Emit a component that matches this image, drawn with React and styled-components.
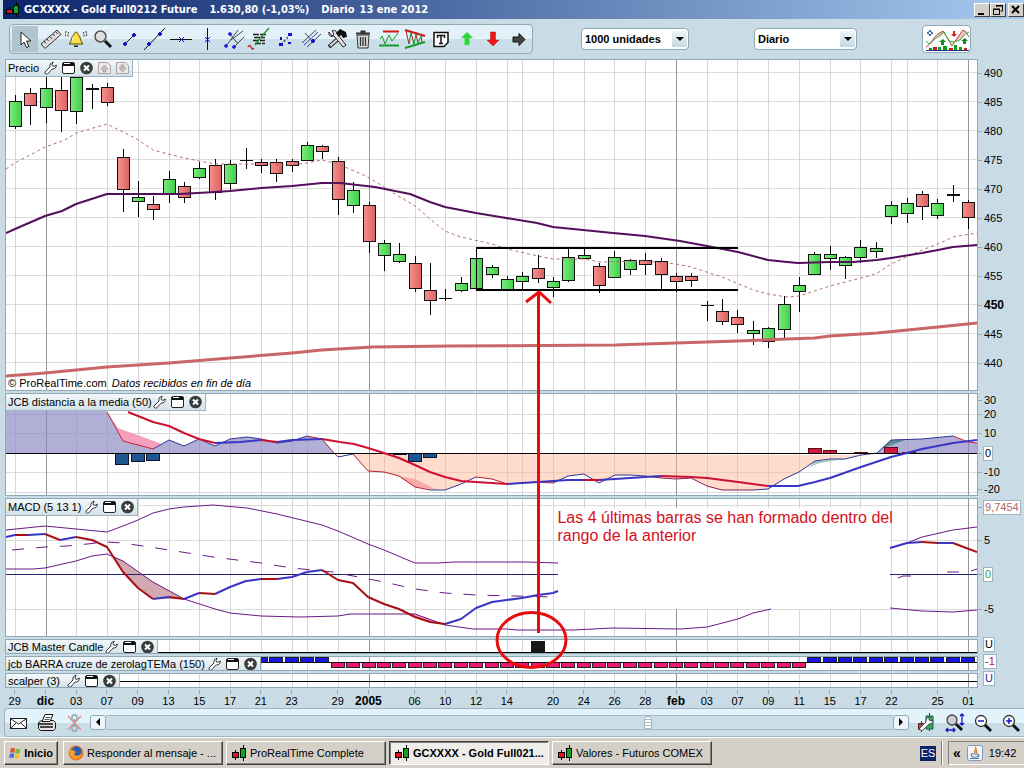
import React from "react";
import styled, { createGlobalStyle } from "styled-components";

const Global = createGlobalStyle`
  * { box-sizing: border-box; }
  body { margin: 0; background: #c9dce5; font-family: "Liberation Sans", Arial, sans-serif; font-size: 11px; color: #000; }
  button, select, input { font: inherit; color: inherit; margin: 0; padding: 0; }
`;

/* ---------- window frame ---------- */
const Window = styled.div`
  display: flex;
  flex-direction: column;
  min-height: 100vh;
`;
const TitleBar = styled.header`
  display: flex;
  align-items: center;
  gap: 4px;
  height: 19px;
  margin-left: 3px;
  padding-left: 2px;
  color: #fff;
  background: linear-gradient(90deg, #0a246a, #a6caf0);
`;
const Title = styled.h1`
  flex: 1;
  display: flex;
  gap: 12px;
  margin: 0;
  font-family: "DejaVu Sans Condensed", "Liberation Sans", sans-serif;
  font-size: 11px;
  font-weight: bold;
  white-space: nowrap;
`;
const DateGroup = styled.span`
  display: flex;
  gap: 5px;
`;
const WinButtons = styled.div`
  display: flex;
`;
const WinButton = styled.button`
  display: flex;
  width: 16px;
  height: 14px;
  margin-left: ${(p) => (p.$apart ? 2 : 0)}px;
  border: 1px solid;
  border-color: #fff #404040 #404040 #fff;
  background: #d4d0c8;
`;

/* ---------- top tools ---------- */
const TopBar = styled.div`
  display: flex;
  align-items: center;
  height: 40px;
  padding: 0 53px 0 9px;
`;
const ToolBox = styled.div`
  display: flex;
  align-items: center;
  height: 30px;
  padding: 0 0 0 2px;
  border: 1px solid #8fa9b7;
  border-radius: 4px;
  background: linear-gradient(#e4f1f8 50%, #cadfe9 50%);
`;
const ToolButton = styled.button`
  display: flex;
  align-items: center;
  justify-content: center;
  width: 26px;
  height: 26px;
  border: 0;
  background: ${(p) => (p.$on ? "#b0c4cf" : "transparent")};
`;
const TopRight = styled.div`
  flex: 1;
  display: flex;
  align-items: center;
  justify-content: space-between;
  padding-left: 48px;
`;
const Picker = styled.label`
  position: relative;
  display: flex;
  width: ${(p) => p.$w}px;
`;
const PickerSelect = styled.select`
  appearance: none;
  width: 100%;
  height: 22px;
  padding: 0 20px 0 3px;
  border: 1px solid #8fa9b7;
  border-radius: 4px;
  background: #fff;
  font-weight: bold;
`;
const PickerArrow = styled.svg`
  position: absolute;
  right: 2px;
  top: 3px;
  background: linear-gradient(#eef5f8, #c5d8e2);
  pointer-events: none;
`;
const StudyButton = styled.button`
  display: flex;
  align-items: center;
  justify-content: center;
  width: 49px;
  height: 28px;
  border: 1px solid #8fa9b7;
  border-radius: 4px;
  background: #fff;
`;

/* ---------- chart panels ---------- */
const Charts = styled.main`
  position: relative;
  display: flex;
  flex-direction: column;
  gap: 2px;
  padding-left: 5px;
`;
const PanelRow = styled.section`
  display: flex;
  height: ${(p) => p.$h}px;
`;
const Plot = styled.div`
  position: relative;
  flex: 1;
  min-width: 0;
  border: 1px solid #8fa9b7;
  background: #fff;
  overflow: hidden;
`;
const Drawing = styled.svg`
  display: block;
  width: 100%;
  height: 100%;
`;
const PanelHead = styled.div`
  position: absolute;
  left: 0;
  top: 0;
  display: flex;
  align-items: center;
  gap: 5px;
  height: ${(p) => (p.$thin ? 15 : 17)}px;
  padding: 0 3px 0 2px;
  border-right: 1px solid #9fb4c0;
  border-bottom: 1px solid #9fb4c0;
  background: linear-gradient(#f3f8fa, #d3e2e9);
`;
const PanelName = styled.h2`
  width: ${(p) => p.$w}px;
  margin: 0 -5px 0 0;
  font-size: 11px;
  font-weight: normal;
  white-space: nowrap;
`;
const HeadButton = styled.button`
  display: flex;
  width: 13px;
  height: 14px;
  border: 0;
  background: none;
`;
const Scale = styled.div`
  width: 46px;
`;
const ScaleMark = styled.div`
  display: flex;
  align-items: center;
  height: ${(p) => p.$h}px;
  font-weight: ${(p) => (p.$bold ? "bold" : "normal")};
  font-size: ${(p) => (p.$bold ? 12 : 11)}px;
  color: ${(p) => p.$color || "#000"};
  &::before {
    content: "";
    width: 4px;
    height: 1px;
    margin-right: 1px;
    background: ${(p) => (p.$noTick ? "transparent" : "#8fa9b7")};
  }
`;
const ScaleBox = styled.span`
  padding: 0 1px;
  line-height: 13px;
  border: ${(p) => (p.$boxed ? "1px solid #9fb4c0" : "0")};
  background: ${(p) => (p.$boxed ? "#fff" : "transparent")};
`;
const Credit = styled.p`
  position: absolute;
  left: 2px;
  bottom: 0;
  display: flex;
  gap: 5px;
  margin: 0;
  line-height: 13px;
`;
const Marking = styled.svg`
  position: absolute;
  left: 0;
  top: 0;
  width: 100%;
  height: 100%;
  pointer-events: none;
`;
const Note = styled.p`
  position: absolute;
  left: 57%;
  top: 10px;
  margin: 0 0 0 -2px;
  width: 340px;
  font-size: 16px;
  line-height: 18px;
  color: #d4101c;
`;
const Dates = styled.div`
  display: grid;
  grid-template-columns: repeat(63, minmax(0, 1fr));
  height: 20px;
  padding: 2px 48px 0 7px;
`;
const DateMark = styled.div`
  grid-column: ${(p) => p.$col};
  grid-row: 1;
  display: flex;
  flex-direction: column;
  align-items: center;
  font-size: ${(p) => (p.$bold ? 12 : 11)}px;
  font-weight: ${(p) => (p.$bold ? "bold" : "normal")};
  line-height: 14px;
  &::before {
    content: "";
    width: 1px;
    height: 4px;
    flex: none;
    background: #8fa9b7;
  }
`;

/* ---------- bottom bar ---------- */
const BottomBar = styled.div`
  display: flex;
  align-items: center;
  gap: 8px;
  height: 29px;
  margin-left: 4px;
  padding: 0 3px 0 4px;
  border: 1px solid #9fb4c0;
  border-right: 0;
  border-radius: 4px 0 0 4px;
  background: linear-gradient(#e2f3fb 50%, #c9dde7 50%);
`;
const BarButton = styled.button`
  display: flex;
  width: 20px;
  height: 20px;
  border: 0;
  background: none;
`;
const Scroll = styled.div`
  flex: 1;
  display: flex;
  align-items: center;
  margin: 0 0 0 -3px;
`;
const ScrollButton = styled.button`
  display: flex;
  width: 16px;
  height: 15px;
  border: 1px solid #8fa9b7;
  border-radius: 3px;
  background: #eef6fa;
`;
const ScrollTrack = styled.input`
  appearance: none;
  flex: 1;
  min-width: 0;
  height: 15px;
  border: solid #a5bac6;
  border-width: 1px 0;
  background: #cbdee7;
  &::-webkit-slider-thumb {
    appearance: none;
    width: 8px;
    height: 14px;
    border: 1px solid #9fb4c0;
    border-radius: 3px;
    background: repeating-linear-gradient(#fff 0 2px, #a5bac6 2px 3px);
  }
`;
const BarIcons = styled.div`
  display: flex;
  gap: 8px;
`;

/* ---------- task bar ---------- */
const TaskBar = styled.footer`
  display: flex;
  align-items: center;
  gap: 3px;
  height: 31px;
  padding: 0 0 0 4px;
  border-top: 1px solid #fff;
  background: #d4d0c8;
`;
const TaskButton = styled.button`
  display: flex;
  align-items: center;
  gap: 3px;
  width: ${(p) => p.$w}px;
  min-width: 0;
  height: 24px;
  padding: 0 4px;
  border: 1px solid;
  border-color: ${(p) => (p.$on ? "#404040 #fff #fff #404040" : "#fff #404040 #404040 #fff")};
  box-shadow: ${(p) => (p.$on ? "inset 1px 1px #808080" : "inset -1px -1px #808080")};
  background: ${(p) => (p.$on ? "#efedea" : "#d4d0c8")};
  font-family: "Liberation Sans", Arial, sans-serif;
  font-weight: ${(p) => (p.$strong ? "bold" : "normal")};
  white-space: nowrap;
`;
const StartWrap = styled.div`
  margin-right: 2px;
`;
const Spacer = styled.div`
  flex: 1;
`;
const Lang = styled.span`
  width: 16px;
  line-height: 15px;
  text-align: center;
  color: #fff;
  background: #0a246a;
`;
const Divider = styled.span`
  width: 2px;
  height: 24px;
  margin: 0 2px;
  border-left: 1px solid #808080;
  border-right: 1px solid #fff;
`;
const Tray = styled.div`
  display: flex;
  align-items: center;
  gap: 6px;
  width: 76px;
  height: 24px;
  padding-left: 4px;
  border: solid #808080;
  border-width: 1px 0 0 1px;
  border-bottom: 1px solid #fff;
`;
const Chevron = styled.span`
  font-weight: bold;
  font-size: 14px;
  line-height: 12px;
`;

/* ---------- data ---------- */
const xAt = (n) => Math.round(15 + n * 15.371);
const GRID = [0, 4, 6, 8, 10, 12, 14, 16, 18, 19, 21, 24, 26, 28, 30, 32, 33, 35, 37, 39, 41, 45, 47, 49, 51, 53, 55, 57, 58, 60];
const MONTHS = [2, 23, 43, 62];

// side, wick top, body top, body bottom, wick bottom
const CANDLES = [
  ["g", 95, 101, 126, 128], ["r", 88, 93, 105, 124], ["g", 77, 88, 107, 122], ["r", 77, 90, 110, 131],
  ["g", 77, 77, 111, 123], ["d", 84, 88, 90, 108], ["r", 83, 87, 102, 105], ["r", 149, 157, 189, 211],
  ["g", 181, 197, 201, 216], ["r", 196, 204, 209, 219], ["g", 171, 179, 193, 202], ["r", 182, 186, 197, 202],
  ["g", 162, 168, 177, 178], ["r", 159, 165, 192, 199], ["g", 160, 164, 183, 189], ["d", 148, 160, 161, 168],
  ["r", 159, 162, 165, 172], ["r", 159, 162, 173, 181], ["r", 159, 161, 165, 171], ["g", 142, 145, 160, 160],
  ["r", 145, 146, 151, 158], ["r", 157, 161, 199, 214], ["g", 182, 190, 205, 212], ["r", 202, 205, 241, 252],
  ["g", 240, 243, 255, 270], ["g", 243, 254, 261, 262], ["r", 256, 263, 288, 291], ["r", 263, 290, 300, 314],
  ["d", 289, 298, 299, 300], ["g", 277, 283, 290, 291], ["g", 248, 258, 288, 289], ["g", 265, 267, 274, 277],
  ["g", 276, 279, 289, 289], ["g", 272, 276, 281, 288], ["r", 255, 268, 278, 282], ["g", 277, 281, 287, 296],
  ["g", 248, 257, 280, 281], ["g", 248, 255, 258, 258], ["r", 263, 266, 285, 292], ["g", 251, 257, 277, 277],
  ["g", 259, 260, 269, 274], ["r", 253, 260, 264, 274], ["r", 258, 261, 274, 290], ["r", 273, 276, 281, 291],
  ["r", 273, 276, 280, 286], ["d", 301, 305, 306, 320], ["r", 299, 311, 321, 324], ["r", 310, 317, 324, 332],
  ["g", 321, 330, 333, 344], ["g", 327, 328, 341, 347], ["g", 296, 304, 329, 338], ["g", 277, 285, 291, 311],
  ["g", 252, 254, 274, 274], ["g", 246, 254, 258, 269], ["g", 256, 257, 265, 278], ["g", 240, 247, 257, 262],
  ["g", 242, 248, 251, 257], ["g", 201, 205, 216, 223], ["g", 198, 203, 213, 222], ["r", 191, 194, 206, 219],
  ["g", 199, 203, 215, 218], ["d", 185, 194, 196, 201], ["r", 200, 202, 217, 228],
];

const DATES = [
  [0, "29"], [2, "dic", 1], [4, "03"], [6, "07"], [8, "09"], [10, "13"], [12, "15"], [14, "17"], [16, "21"], [18, "23"],
  [21, "29"], [23, "2005", 1], [26, "06"], [28, "10"], [30, "12"], [32, "14"], [35, "20"], [37, "24"], [39, "26"], [41, "28"],
  [43, "feb", 1], [45, "03"], [47, "07"], [49, "09"], [51, "11"], [53, "15"], [55, "17"], [57, "22"], [60, "25"], [62, "01"],
];

const RED = "#cc1133";
const BLUE = "#3a35c4";
const DARKRED = "#a80f14";
const DISTANCE_SIGNAL = [
  [RED, "128,412 153,422 169,426 184,433 199,439 215,443"],
  [BLUE, "215,443 240,442 261,440"],
  [RED, "261,440 277,442"],
  [BLUE, "277,442 292,440 322,439"],
  [RED, "322,439 340,442 354,444 368,448 384,453 399,458 415,465 430,472 445,477 461,481 476,482 507,484"],
  [BLUE, "507,484 522,483 538,482 568,480 584,480"],
  [RED, "584,480 599,480"],
  [BLUE, "599,480 615,479 645,477 661,476"],
  [RED, "661,476 691,477 707,478 738,482 768,486"],
  [BLUE, "768,486 798,486 815,482 830,478 861,467 891,457 907,453 922,449 953,443 977,440"],
];
const MACD_LINE = [
  [BLUE, "6,537 15,535"], [DARKRED, "15,535 28,535"], [BLUE, "28,535 45,534"], [DARKRED, "45,534 60,540"],
  [BLUE, "60,540 76,537"], [DARKRED, "76,537 92,540 107,547 123,572 138,588 153,599"], [BLUE, "153,599 169,597"],
  [DARKRED, "169,597 184,599"], [BLUE, "184,599 199,593"], [DARKRED, "199,593 215,594"],
  [BLUE, "215,594 230,587 246,581 261,579"], [DARKRED, "261,579 277,579"], [BLUE, "277,579 292,577 307,572 322,570"],
  [DARKRED, "322,570 338,580 353,583 368,597 384,604 399,609 415,617 430,622 445,624"],
  [BLUE, "445,624 461,619 476,608 492,602 522,598 538,595 553,593 558,591"],
  [BLUE, "890,548 907,543 922,542"], [DARKRED, "922,542 938,543"], [BLUE, "938,543 953,543"], [DARKRED, "953,543 977,552"],
];

/* ---------- drawing parts ---------- */
function GridLines({ top, bottom, rows = [] }) {
  return (
    <g shapeRendering="crispEdges">
      {rows.map((y) => <rect key={y} x="6" y={y} width="972" height="1" fill="#dcdcdc" />)}
      {GRID.map((n) => <rect key={n} x={xAt(n)} y={top} width="1" height={bottom - top} fill="#d6d6d6" />)}
      {MONTHS.map((n) => <rect key={n} x={xAt(n)} y={top} width="1" height={bottom - top} fill="#969696" />)}
    </g>
  );
}

function Candle({ n, data }) {
  const [side, hi, top, bottom, lo] = data;
  const x = xAt(n);
  return (
    <g shapeRendering="crispEdges">
      <rect x={x} y={hi} width="1" height={lo - hi + 1} fill="#000" />
      <rect x={x - 6} y={top} width="13" height={bottom - top + (side === "d" ? 0 : 1)} fill="#111" />
      {side !== "d" && (
        <rect x={x - 5} y={top + 1} width="11" height={bottom - top - 1} fill={side === "g" ? "url(#up)" : "url(#down)"} />
      )}
    </g>
  );
}

const Trace = ({ d, color, w = 1, dash }) => (
  <polyline points={d} fill="none" stroke={color} strokeWidth={w} strokeDasharray={dash} strokeLinejoin="round" />
);

const Canvas = ({ y, h, children }) => (
  <Drawing viewBox={`6 ${y} 971 ${h}`} preserveAspectRatio="none" aria-hidden="true">{children}</Drawing>
);

function Wrench() {
  return (
    <svg width="13" height="14" viewBox="0 0 13 14">
      <path d="M1 11l5-5c-.6-2 .6-4.500 3.200-4.800L8 3.300l.5 1.700 1.700.3L12.300 4c.3 2.600-1.800 4.300-4.100 4L3.500 13C2 13.500.5 12.500 1 11z" fill="#fff" stroke="#333" />
    </svg>
  );
}
function HeadIcons({ extra }) {
  return (
    <>
      <HeadButton aria-label="Configurar"><Wrench /></HeadButton>
      <HeadButton aria-label="Ventana">
        <svg width="13" height="14" viewBox="0 0 13 14">
          <rect x=".5" y="1.500" width="12" height="11" rx="1.500" fill="#fff" stroke="#222" />
          <path d="M1 2h11v3H1z" fill="#111" />
          <path d="M2 2.500h6" stroke="#fff" />
        </svg>
      </HeadButton>
      <HeadButton aria-label="Cerrar">
        <svg width="13" height="14" viewBox="0 0 13 14">
          <circle cx="6.500" cy="7" r="6.300" fill="#3c3c3c" />
          <path d="M4 4.500l5 5M9 4.500l-5 5" stroke="#fff" strokeWidth="2" />
        </svg>
      </HeadButton>
      {extra && [0, 1].map((k) => (
        <HeadButton key={k} aria-label={k ? "Bajar" : "Subir"}>
          <svg width="13" height="14" viewBox="0 0 13 14">
            <path d="M.5 1.500h9l3 3v8H.5z" fill="#ece9e9" stroke="#aaa3a3" />
            <path d={k ? "M6.500 11L3 7h2V4h3v3h2z" : "M6.500 4L3 8h2v3h3V8h2z"} fill="#c9bcbc" stroke="#998f8f" strokeWidth=".6" />
          </svg>
        </HeadButton>
      ))}
    </>
  );
}
const Head = ({ name, w, thin, extra }) => (
  <PanelHead $thin={thin}>
    <PanelName $w={w}>{name}</PanelName>
    <HeadIcons extra={extra} />
  </PanelHead>
);
const Mark = ({ h, children, boxed, ...rest }) => (
  <ScaleMark $h={h} {...rest}><ScaleBox $boxed={boxed}>{children}</ScaleBox></ScaleMark>
);

function CandleLogo({ size = 16 }) {
  return (
    <svg width={size} height={size} viewBox="0 0 16 16" shapeRendering="crispEdges">
      <path d="M4 5h1v10H4zM12 0h1v16h-1z" fill="#000" />
      <path d="M1 7h7v6H1zM9 3h6v10H9z" fill="#000" />
      <path d="M2 8h5v4H2z" fill="#e3131c" />
      <path d="M10 4h4v8h-4z" fill="#0fa31f" />
    </svg>
  );
}

const plus = (x, y) => `M${x - 2} ${y}h4M${x} ${y - 2}v4`;
const B = "#1414d2";
const TOOLS = [
  ["Cursor", <path d="M8 5v13l3-3 2.500 5.500 2.500-1-2.500-5.500h4.500z" fill="#fff" stroke="#222" />],
  ["Regla", <g><path d="M2 17L18 3l4 4.500L6 21.500z" fill="#ddd" stroke="#333" /><path d="M5 14l2 2.500M8 12l1.500 2M11 9.500l2 2.500M14 7l1.500 2M16.500 4.500l2 2.500" stroke="#333" /></g>],
  ["Alarma", <g><path d="M4 17c3-2 2-8 5-9.500 0-3 4-3 4 0 3 1.500 2 7.500 5 9.500z" fill="#fbe04a" stroke="#5c4800" /><path d="M7 14c1-2 1-4 2-5" stroke="#fff" fill="none" /><path d="M9 18.500h4v1.500H9z" fill="#222" /><path d="M4 5c-1.500 1.500-1.500 3-.5 5M1.500 4C0 6 0 8 1 10M18 5c1.500 1.500 1.500 3 .5 5M20.500 4c1.500 2 1.500 4 .5 6" fill="none" stroke="#222" strokeDasharray="2 1" /></g>],
  ["Lupa", <g><circle cx="9.500" cy="9.500" r="5.500" fill="#d9dde0" stroke="#555" strokeWidth="1.500" /><path d="M6.500 9c.5-1.500 1.500-2.500 3-2.500" stroke="#fff" fill="none" /><path d="M14 14l6 6" stroke="#111" strokeWidth="3" /></g>],
  ["Segmento", <g><path d="M8 17l9-9" stroke="#222" /><path d={plus(8, 17) + plus(17, 8)} stroke={B} strokeWidth="2" /></g>],
  ["Recta", <g><path d="M1 23L22 1" stroke="#111" /><path d={plus(6, 17) + plus(17, 7)} stroke={B} strokeWidth="2" /></g>],
  ["Horizontal", <g><path d="M1 12.500h22" stroke="#111" /><path d="M10 10l5 5M15 10l-5 5" stroke={B} /></g>],
  ["Vertical", <g><path d="M12.500 1v22" stroke="#111" /><path d="M10 10l5 5M15 10l-5 5" stroke={B} /></g>],
  ["Horquilla", <g><path d="M5 19L17 3M10 13L22 4M13 20L23 10M9 7l8 10" stroke="#333" strokeWidth=".9" /><path d={plus(9, 7) + plus(5, 19) + plus(13, 20)} stroke={B} strokeWidth="1.500" /></g>],
  ["Fibonacci", <g><path d="M6 7.500h14M7 10.500h11M6 13.500h12M8 16.500h10" stroke="#222" strokeWidth="1.500" strokeDasharray="6 1" /><path d="M8 18L15 9 22 1" fill="none" stroke="#159a27" strokeWidth="1.300" /><path d="M1 20c1-2 2-2 3 0s1 3 3 1" fill="none" stroke="#d21c1c" strokeWidth="1.500" /></g>],
  ["Puntos", <g><path d="M8 17l9-10M11 15l4-4" stroke="#222" strokeDasharray="2 2" /><path d="M6 16h4v3H6zM15 6h4v3h-4zM7 10h2v3H7zM15 15h3v2h-3z" fill={B} /></g>],
  ["Paralelas", <g><path d="M3 16L17 3M8 20L22 7M6 6l9 10" stroke="#333" strokeWidth=".9" /><path d={plus(14, 14)} stroke={B} strokeWidth="2" /><path d="M5 18L19 5" stroke={B} strokeWidth=".8" /></g>],
  ["Herramientas", <g><path d="M4 20L14 11" stroke="#222" strokeWidth="4" /><path d="M5 19L14 11" stroke="#ddd" strokeWidth="2" /><path d="M4 5c-1 4 2 5 5 4l9 11 3-2-9-11c0-3-2-4-5-3l2 3-2 2z" fill="#e4e4e4" stroke="#222" /><path d="M11 6l4-4 6 3 1 5-4 1-2-3-2 2z" fill="#111" /></g>],
  ["Papelera", <g><path d="M6 8h12l-1 13H7z" fill="#ddd" stroke="#333" /><path d="M5 6.500h14M9.500 4.500h5" stroke="#333" strokeWidth="2" /><path d="M9.500 10v9M12 10v9M14.500 10v9" stroke="#333" strokeWidth="1.300" /></g>],
  ["Canal", <g><path d="M6 4.500h16" stroke="#d01818" strokeWidth="2" /><path d="M2 18.500h20" stroke="#129f25" strokeWidth="2" /><path d="M3 12l2-3 3 8 4-9 3 6 6-8" fill="none" stroke="#129f25" /></g>],
  ["Triangulo", <g><path d="M2 3l20 6" stroke="#d01818" strokeWidth="2" /><path d="M2 21l20-6" stroke="#129f25" strokeWidth="2" /><path d="M3 4l3 13M8 6l3 11M13 7l2 9M18 9l1 6" fill="none" stroke="#b02020" /><path d="M6 17l2-11M11 17l2-10M15 16l3-7" fill="none" stroke="#129f25" /></g>],
  ["Texto", <g><path d="M5 5.500h14v10l-4 4H5z" fill="#fff" stroke="#111" strokeWidth="1.500" /><path d="M8 8.500h8M12 8v8M10 16.500h4M8.500 8v3M15.500 8v3" stroke="#111" strokeWidth="1.500" /></g>],
  ["Flecha arriba", <path d="M12 5l6 6h-3.500v7h-5v-7H6z" fill="#2fd83a" stroke="#7be582" strokeWidth=".5" />],
  ["Flecha abajo", <path d="M12 19l6-6h-3.500V5h-5v8H6z" fill="#ee1717" stroke="#a31b1b" strokeWidth=".5" />],
  ["Flecha derecha", <path d="M6 10h6V6.500l6 6-6 6V15H6z" fill="#444" stroke="#111" />],
];

function Zoom({ sign }) {
  return (
    <svg width="20" height="20" viewBox="0 0 20 20">
      <circle cx="8" cy="8" r="5.500" fill="#fff" stroke="#333" strokeWidth="1.300" />
      <path d="M12 12l6 6" stroke="#111" strokeWidth="3" />
      <path d={sign === "+" ? "M5 8h6M8 5v6" : "M5 8h6"} stroke="#1616c8" strokeWidth="1.500" />
    </svg>
  );
}

const Bars = ({ from, to, y, fill }) =>
  Array.from({ length: to - from + 1 }, (_, k) => (
    <g key={k}>
      <rect x={xAt(from + k) - 7} y={y} width="14" height="6" fill="#222" />
      <rect x={xAt(from + k) - 6} y={y + 1} width="12" height="4" fill={fill} />
    </g>
  ));

const NAVY_BARS = [[115, 12], [131, 9], [146, 8], [393, 2], [408, 9], [423, 5]];
const RED_BARS = [[808, 6], [823, 4], [854, 2], [884, 7], [902, 2]];

export default function App() {
  return (
    <Window>
      <Global />
      <TitleBar>
        <CandleLogo size={15} />
        <Title>
          <span>GCXXXX - Gold Full0212 Future</span>
          <span>1.630,80 (-1,03%)</span>
          <DateGroup><span>Diario</span><span>13 ene 2012</span></DateGroup>
        </Title>
        <WinButtons>
          <WinButton aria-label="Minimizar"><svg width="14" height="12"><path d="M3 9h6v2H3z" /></svg></WinButton>
          <WinButton aria-label="Restaurar"><svg width="14" height="12"><path d="M5.500 3V2h6v5h-2M5 1.500h7M2.500 5.500h6v5h-6zM2 5h7" fill="none" stroke="#000" /></svg></WinButton>
          <WinButton $apart aria-label="Cerrar"><svg width="14" height="12"><path d="M3 2l7 7M10 2L3 9" stroke="#000" strokeWidth="2" /></svg></WinButton>
        </WinButtons>
      </TitleBar>

      <TopBar>
        <ToolBox>
          {TOOLS.map(([name, art], k) => (
            <ToolButton key={name} $on={k === 0} aria-label={name}>
              <svg width="24" height="24" viewBox="0 0 24 24">{art}</svg>
            </ToolButton>
          ))}
        </ToolBox>
        <TopRight>
          <Picker $w={108}>
            <PickerSelect aria-label="Unidades"><option>1000 unidades</option></PickerSelect>
            <PickerArrow width="15" height="16"><path d="M4 6h8l-4 4z" /></PickerArrow>
          </Picker>
          <Picker $w={103}>
            <PickerSelect aria-label="Periodo"><option>Diario</option></PickerSelect>
            <PickerArrow width="15" height="16"><path d="M4 6h8l-4 4z" /></PickerArrow>
          </Picker>
          <StudyButton aria-label="Indicadores">
            <svg width="46" height="25" viewBox="0 0 46 25">
              <path d="M5 16L14 7 19 4 22 6 12 12 6 17z" fill="#f6cfca" />
              <path d="M28 18L34 10 39 3 42 4 40 9 36 13 30 15z" fill="#f6c3c0" />
              <path d="M20 5L24 12 28 19 30 15 25 14z" fill="#cdf2c4" />
              <path d="M2 20C8 17 10 9 14 7L19 4 24 12 28 19 34 10 39 3 42 5 45 10" fill="none" stroke="#a84848" />
              <path d="M2 14L5 17 12 11 20 5 25 14 30 15 36 13 40 8 45 5" fill="none" stroke="#3cae3c" />
              <path d="M19 12l3 3h-2v3h-3v-3h-2zM41 11l3 3h-2v3h-3v-3h-2z" fill="#128b1c" />
              <path d="M30 10l-3-3h2V4h2v3h2z" fill="#d42020" />
              <path d="M6 3l1 2 2 1-2 1-1 2-1-2-2-1 2-1z" fill="#fff" stroke="#234a9c" />
              <path d="M5 21h3v2H5zM14 20h3v3h-3zM19 19h4v4h-4zM30 18h3v5h-3zM35 20h3v3h-3z" fill="#12a01c" />
              <path d="M9 20h4v3H9zM25 21h4v2h-4zM40 21h3v2h-3z" fill="#c82020" />
              <path d="M2 23.500h43" stroke="#1d2f86" />
            </svg>
          </StudyButton>
        </TopRight>
      </TopBar>

      <Charts>
        <PanelRow $h={332}>
          <Plot>
            <Canvas y={60} h={330}>
              <defs>
                <linearGradient id="up"><stop offset="0" stopColor="#7be87b" /><stop offset="1" stopColor="#3fd24a" /></linearGradient>
                <linearGradient id="down"><stop offset="0" stopColor="#f68f8c" /><stop offset="1" stopColor="#dd6163" /></linearGradient>
              </defs>
              <GridLines top={60} bottom={390} rows={[72, 101, 130, 159, 188, 217, 246, 275, 304, 333, 362]} />
              {CANDLES.map((c, n) => <Candle key={n} n={n} data={c} />)}
              <Trace color="#b5706c" dash="3 3" d="6,169 15,163 45,147 65,140 76,133 107,124 135,138 153,150 184,158 215,164 261,164 292,165 307,163 322,160 338,164 368,177 400,197 415,206 430,219 445,231 461,237 492,244 507,249 538,256 553,259 584,259 600,262 645,261 676,264 691,267 722,277 753,290 768,294 787,297 799,296 830,286 861,278 876,274 891,264 922,250 938,244 953,237 977,233" />
              <Trace color="#c9666a" w={3} d="6,376 45,373 76,370 107,367 169,363 230,358 292,353 322,350 338,349 356,348 372,347 450,346 615,345 676,343 738,341 787,339 815,338 830,336 877,333 938,327 977,323" />
              <Trace color="#530f5c" w={2} d="6,233 15,229 45,216 62,211 76,204 107,194 180,194 215,192 230,191 261,188 292,186 322,183 340,183 375,187 410,194 430,202 445,207 476,213 500,217 537,223 553,227 613,233 645,236 680,241 707,246 738,252 753,256 768,260 787,262 798,263 830,262 853,262 877,260 891,258 922,253 938,250 953,247 977,245" />
              <path d="M476 247h262v2H476zM476 289h262v2H476zM476 247h1v43h-1z" fill="#000" shapeRendering="crispEdges" />
            </Canvas>
            <Head name="Precio" w={36} extra />
            <Credit><span>© ProRealTime.com</span><em>Datos recibidos en fin de día</em></Credit>
          </Plot>
          <Scale>
            {[490, 485, 480, 475, 470, 465, 460, 455, 450, 445, 440].map((v) => (
              <Mark key={v} h={29} $bold={v === 450}>{v}</Mark>
            ))}
          </Scale>
        </PanelRow>

        <PanelRow $h={103}>
          <Plot>
            <Canvas y={394} h={101}>
              <GridLines top={394} bottom={495} rows={[414, 433, 472, 492]} />
              <path d="M118 428L107 412 123 441 153 449 162 444zM398 476L415 487 437 490 415 479z" fill="#f6a0bd" />
              <path d="M6 394H100L107 412 123 441 153 449 169 440 184 446 199 439 215 446 230 439 247 437 261 439 277 443 292 441 307 436 322 439 334 453H6zM877 453L891 440 922 439 953 436 968 442 977 443V453z" fill="#8984c0" fillOpacity=".65" />
              <path d="M353 454L368 471 384 472 399 476 415 487 430 490 445 490 461 484 476 477 492 479 507 484 522 483 538 482 553 483 568 476 584 474 599 483 615 475 630 475 645 476 661 478 676 479 691 478 707 486 722 490 753 490 768 489 784 479 799 472 815 461 830 459 845 459 861 455z" fill="#ffb28c" fillOpacity=".45" />
              <path d="M809 467L815 461 845 459 820 463z" fill="#a8cbbd" />
              <path d="M881 449L891 440 905 440z" fill="#5c8f8f" />
              <Trace color="#c22138" d="107,412 123,441 153,449" />
              <Trace color="#32329c" d="153,449 169,440 184,446 199,439 215,446 230,439 247,437 261,439 277,443 292,441 307,436" />
              <Trace color="#b32138" d="307,436 322,439 334,453 338,457" />
              <Trace color="#32329c" d="338,457 353,454" />
              <Trace color="#b32138" d="353,454 368,471 384,472 399,476 415,487 430,490" />
              <Trace color="#32329c" d="430,490 445,490 461,484 476,477" />
              <Trace color="#b32138" d="476,477 492,479 507,484 522,483 538,482 553,483" />
              <Trace color="#32329c" d="553,483 568,476 584,474 599,483 615,475 630,475 645,476" />
              <Trace color="#8a1f50" d="645,476 661,478 676,479 691,478 707,486 722,490 753,490" />
              <Trace color="#32329c" d="753,490 768,489 784,479 799,472 815,461 830,459 845,459 861,455 877,453 891,440 922,439 953,436" />
              <Trace color="#c22138" d="953,436 968,442 977,443" />
              <g shapeRendering="crispEdges">
                {NAVY_BARS.map(([x, h]) => (
                  <g key={x}><rect x={x} y="453" width="14" height={h} fill="#06142c" /><rect x={x + 1} y="454" width="12" height={Math.max(0, h - 2)} fill="#1f5590" /></g>
                ))}
                {RED_BARS.map(([x, h]) => (
                  <g key={x}><rect x={x} y={454 - h} width="14" height={h} fill="#5c0717" /><rect x={x + 1} y={455 - h} width="12" height={Math.max(0, h - 2)} fill="#d2193e" /></g>
                ))}
                <rect x="6" y="453" width="971" height="1" fill="#000" />
              </g>
              {DISTANCE_SIGNAL.map(([c, d]) => <Trace key={d} color={c} w={2} d={d} />)}
            </Canvas>
            <Head name="JCB distancia a la media (50)" w={145} />
          </Plot>
          <Scale>
            <Mark h={14}>30</Mark>
            <Mark h={14}>20</Mark>
            <Mark h={24}>10</Mark>
            <Mark h={16} boxed>0</Mark>
            <Mark h={22}>-10</Mark>
            <Mark h={12}>-20</Mark>
          </Scale>
        </PanelRow>

        <PanelRow $h={139}>
          <Plot>
            <Canvas y={499} h={137}>
              <GridLines top={499} bottom={636} rows={[505, 540, 609]} />
              <rect x="558" y="508" width="332" height="101" fill="#fff" />
              <path d="M113 556L123 561 153 582 184 599 153 599 138 588 123 572z" fill="#d3a9b1" />
              <path d="M402 612L415 614 445 624 430 622z" fill="#f4a0c8" />
              <g shapeRendering="crispEdges" fill="#22226e"><rect x="6" y="574" width="552" height="1" /><rect x="890" y="574" width="87" height="1" /></g>
              <Trace color="#6a1a84" d="6,530 45,526 76,529 107,532 123,526 138,520 153,513 169,509 184,507 213,505 247,508 277,514 322,525 338,531 368,544 384,550 415,563 438,563 455,562 527,562 558,563" />
              <Trace color="#6a1a84" dash="12 12" d="12,550 45,547 67,546 107,542 123,543 169,550 213,557 261,563 292,568 333,572 348,575 384,582 415,589 445,593 476,595 553,597" />
              <Trace color="#6a1a84" d="6,569 33,569 45,568 76,561 92,556 107,554 123,561 153,582 184,599 215,609 230,613 261,616 300,617 338,616 350,614 415,614 445,625 473,629 507,629 517,630 573,630 613,628 680,629 707,627 738,619 753,613 771,609" />
              <Trace color="#6a1a84" d="890,548 907,543 922,537 953,530 977,527" />
              <Trace color="#6a1a84" d="890,608 922,611 953,612 977,610" />
              <path d="M898 578L903 576H911M947 572H959M971 571L977 569" fill="none" stroke="#6a1a84" />
              {MACD_LINE.map(([c, d]) => <Trace key={d} color={c} w={2} d={d} />)}
            </Canvas>
            <Head name="MACD (5 13 1)" w={77} />
            <Note>Las 4 últimas barras se han formado dentro del rango de la anterior</Note>
          </Plot>
          <Scale>
            <Mark h={18} boxed $color="#b5645f">9,7454</Mark>
            <Mark h={49}>5</Mark>
            <Mark h={18} boxed $color="#3f9a3f">0</Mark>
            <Mark h={52}>-5</Mark>
          </Scale>
        </PanelRow>

        <PanelRow $h={15}>
          <Plot>
            <Canvas y={640} h={13}>
              <GridLines top={640} bottom={653} />
              <g shapeRendering="crispEdges"><rect x="6" y="652" width="971" height="1" fill="#000" /><rect x="531" y="641" width="14" height="12" fill="#181818" /></g>
            </Canvas>
            <Head name="JCB Master Candle" w={97} thin />
          </Plot>
          <Scale><Mark h={11} boxed $noTick>U</Mark></Scale>
        </PanelRow>
        <PanelRow $h={15}>
          <Plot>
            <Canvas y={657} h={13}>
              <GridLines top={657} bottom={670} />
              <g shapeRendering="crispEdges">
                <Bars from={16} to={20} y={657} fill="#1717e0" />
                <Bars from={21} to={51} y={662} fill="#f0186c" />
                <Bars from={52} to={62} y={657} fill="#1717e0" />
                <rect x="6" y="662" width="971" height="1" fill="#111" />
              </g>
            </Canvas>
            <Head name="jcb BARRA cruze de zerolagTEMa (150)" w={200} thin />
          </Plot>
          <Scale><Mark h={11} boxed $noTick $color="#b5104e">-1</Mark></Scale>
        </PanelRow>
        <PanelRow $h={15}>
          <Plot>
            <Canvas y={674} h={13}>
              <GridLines top={674} bottom={687} />
              <rect x="6" y="681" width="971" height="1" fill="#000" shapeRendering="crispEdges" />
            </Canvas>
            <Head name="scalper (3)" w={59} thin />
          </Plot>
          <Scale><Mark h={11} boxed $noTick $color="#2a2a8c">U</Mark></Scale>
        </PanelRow>
        <Marking viewBox="0 59 1024 629" preserveAspectRatio="none" aria-hidden="true">
          <g fill="none" stroke="#e80c0c" strokeWidth="3">
            <path d="M538.500 633V293M526 302L539 292 551 303" />
            <ellipse cx="531.500" cy="640" rx="34.500" ry="27.500" />
          </g>
        </Marking>
      </Charts>

      <Dates>
        {DATES.map(([n, text, bold]) => <DateMark key={n} $col={n + 1} $bold={bold}>{text}</DateMark>)}
      </Dates>

      <BottomBar>
        <BarIcons>
          <BarButton aria-label="Correo">
            <svg width="20" height="20" viewBox="0 0 20 20"><rect x="1.500" y="5.500" width="16" height="10" fill="#fff" stroke="#222" /><path d="M2 6l7.500 5L17 6M2 15l5-5M17 15l-5-5" fill="none" stroke="#222" /></svg>
          </BarButton>
          <BarButton aria-label="Imprimir">
            <svg width="20" height="20" viewBox="0 0 20 20"><path d="M1.500 9.500l3-2h12l2 2v6l-2 2h-13l-2-2z" fill="#e4e4e4" stroke="#111" /><path d="M5 8.500l3-7h8l-3 7z" fill="#fff" stroke="#111" /><path d="M8.500 4.500h5M7.500 6.500h5" stroke="#555" /><path d="M2 11h14M3 14h13" stroke="#111" strokeWidth="1.500" /></svg>
          </BarButton>
          <BarButton aria-label="Desvincular">
            <svg width="20" height="20" viewBox="0 0 20 20"><rect x="7" y="2" width="5" height="6" rx="2" fill="none" stroke="#8aa" strokeWidth="1.500" /><rect x="7" y="12" width="5" height="6" rx="2" fill="none" stroke="#8aa" strokeWidth="1.500" /><path d="M9.500 6v8" stroke="#8aa" strokeWidth="1.500" /><path d="M3 3l13 14M16 3L3 17" stroke="#dd8d92" strokeWidth="1.300" /></svg>
          </BarButton>
        </BarIcons>
        <Scroll>
          <ScrollButton aria-label="Anterior"><svg width="14" height="13"><path d="M9 2v8L5 6z" /></svg></ScrollButton>
          <ScrollTrack type="range" min="0" max="100" defaultValue="69" aria-label="Desplazamiento" />
          <ScrollButton aria-label="Siguiente"><svg width="14" height="13"><path d="M5 2v8l4-4z" /></svg></ScrollButton>
        </Scroll>
        <BarIcons>
          <BarButton aria-label="Estilo">
            <svg width="20" height="20" viewBox="0 0 20 20"><path d="M12.500 0v18M4.500 8v11" stroke="#244" /><path d="M9 3h7v13H9z" fill="#3fa159" stroke="#164" /><path d="M1.500 10.500h5v6h-5z" fill="#a5484b" stroke="#522" /><path d="M3 15l6-6c0-3 1-4 3-5v3l2 1 2-1c0 3-2 4-4 4l-6 6c-2 1-4 0-3-2z" fill="#fff" stroke="#333" strokeWidth=".8" /></svg>
          </BarButton>
          <BarButton aria-label="Ajustar">
            <svg width="20" height="20" viewBox="0 0 20 20"><circle cx="7" cy="7" r="5" fill="#ccd0d2" stroke="#444" strokeWidth="1.300" /><path d="M11 11l6 6" stroke="#111" strokeWidth="3" /><path d="M17 1v11M15 3l2-2 2 2M15 10l2 2 2-2M1 17h9M3 15l-2 2 2 2M8 15l2 2-2 2" fill="none" stroke="#1616c8" strokeWidth="1.300" /></svg>
          </BarButton>
          <BarButton aria-label="Alejar"><Zoom sign="-" /></BarButton>
          <BarButton aria-label="Acercar"><Zoom sign="+" /></BarButton>
        </BarIcons>
      </BottomBar>

      <TaskBar>
        <StartWrap>
          <TaskButton $w={54} $strong>
            <svg width="14" height="14" viewBox="1 1 14 14"><path d="M3 3c2-1 3-1 5 0L7 8C5 7 4 7 2 8z" fill="#e2552c" /><path d="M9 3c2 1 3 1 5 0l-1 5c-2 1-3 1-5 0z" fill="#7cb83a" /><path d="M2 9c2-1 3-1 5 0l-1 5c-2-1-3-1-5 0z" fill="#3f6fd0" /><path d="M8 9c2 1 3 1 5 0l-1 5c-2 1-3 1-5 0z" fill="#f2bd2d" /></svg>
            Inicio
          </TaskButton>
        </StartWrap>
        <TaskButton $w={160}>
          <svg width="16" height="16" viewBox="0 0 16 16"><circle cx="8" cy="8" r="7.500" fill="#e8751a" /><circle cx="8.500" cy="6.500" r="5" fill="#2c5fae" /><path d="M1 4c1 1 2 1 4 1l3 2-2 2c1 2 5 3 8-1-1 5-5 7-8 6S1 10 1 4z" fill="#f49a2a" /></svg>
          Responder al mensaje - ...
        </TaskButton>
        <TaskButton $w={160}><CandleLogo />ProRealTime Complete</TaskButton>
        <TaskButton $w={160} $on $strong><CandleLogo />GCXXXX - Gold Full021...</TaskButton>
        <TaskButton $w={160}><CandleLogo />Valores - Futuros COMEX</TaskButton>
        <Spacer />
        <Lang>ES</Lang>
        <Divider />
        <Tray>
          <Chevron>«</Chevron>
          <svg width="16" height="16" viewBox="0 0 16 16"><rect x=".5" y=".5" width="15" height="15" rx="2" fill="#f4f6f8" stroke="#7c9cbc" /><path d="M8 2c3 2-2 3 0 6M10 5c-1 1-1 2 0 3" fill="none" stroke="#e07a22" strokeWidth="1.300" /><path d="M4 9h7v3H5zM3 13.500h9M11 9.500c2 0 2 2 0 2" fill="none" stroke="#4a76a8" /></svg>
          <time>19:42</time>
        </Tray>
      </TaskBar>
    </Window>
  );
}
